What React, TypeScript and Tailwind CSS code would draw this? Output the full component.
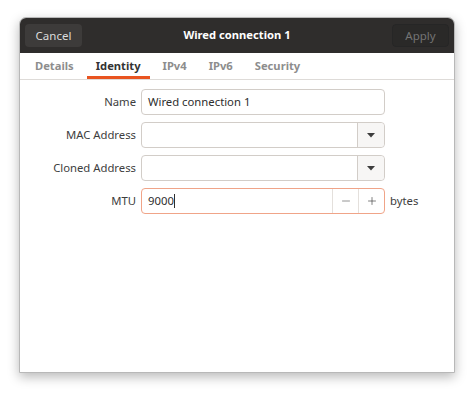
import { Minus, Plus } from "lucide-react";

const font = { fontFamily: '"Noto Sans", "Open Sans", sans-serif' };

function Caret() {
  return (
    <svg width="8" height="5" viewBox="0 0 8 5">
      <path d="M0 0 H8 L4 4.5 Z" fill="#3d3d3d" />
    </svg>
  );
}

function Row({ label, children }: { label: string; children: React.ReactNode }) {
  return (
    <div className="flex items-center h-[26px]">
      <div className="w-[121px] text-right pr-[5px] text-[11.3px] text-[#3d3d3d]">{label}</div>
      {children}
    </div>
  );
}

function Combo() {
  return (
    <div className="flex w-[244px] h-[26px] border border-[#d2cdc8] rounded-[4px] bg-white">
      <div className="flex-1" />
      <div className="w-[27px] border-l border-[#d2cdc8] bg-[#f7f6f5] rounded-r-[4px] flex items-center justify-center">
        <Caret />
      </div>
    </div>
  );
}

export default function App() {
  const tabs = ["Details", "Identity", "IPv4", "IPv6", "Security"];
  return (
    <div className="w-[474px] h-[395px] bg-white pt-[17px] pl-[19px]" style={font}>
      <div className="w-[436px] h-[356px] bg-white rounded-t-[7px] border border-[#b8b8b8] shadow-[0_4px_12px_rgba(0,0,0,0.28)] flex flex-col overflow-hidden">
        {/* Header bar */}
        <div className="h-[35px] bg-[#2f2d2c] flex items-center justify-between px-[5px] shrink-0">
          <button className="w-[57px] h-[23px] rounded-[4px] bg-[#3d3b3a] text-[#dcdcdc] text-[11.5px]">
            Cancel
          </button>
          <div className="text-white font-bold text-[11.2px]">Wired connection 1</div>
          <button className="w-[57px] h-[23px] rounded-[4px] bg-[#2a2928] border border-[#262626] text-[#747474] text-[11.5px]">
            Apply
          </button>
        </div>

        {/* Tabs */}
        <div className="h-[27px] border-b border-[#dedbd8] flex items-stretch gap-[4px] pl-[6px] shrink-0">
          {tabs.map((t) => {
            const active = t === "Identity";
            return (
              <div
                key={t}
                className={
                  "px-[9px] flex items-center text-[11.2px] font-bold border-b-[3px] " +
                  (active
                    ? "border-[#e95420] text-[#333333]"
                    : "border-transparent text-[#8d8d8d]")
                }
              >
                <span className="pt-[3px]">{t}</span>
              </div>
            );
          })}
        </div>

        {/* Form */}
        <div className="flex flex-col gap-[7px] pt-[9px]">
          <Row label="Name">
            <div className="w-[244px] h-[26px] border border-[#d2cdc8] rounded-[4px] flex items-center px-[6px] text-[11.3px] text-[#2e2e2e]">
              Wired connection 1
            </div>
          </Row>
          <Row label="MAC Address">
            <Combo />
          </Row>
          <Row label="Cloned Address">
            <Combo />
          </Row>
          <Row label="MTU">
            <div className="flex w-[244px] h-[26px] border border-[#f0a488] rounded-[4px] bg-white">
              <div className="flex-1 flex items-center px-[6px] text-[11.3px] text-[#2e2e2e]">
                9000<span className="w-px h-[14px] bg-[#2e2e2e]" />
              </div>
              <div className="w-[26px] border-l border-[#e4e0dc] flex items-center justify-center">
                <Minus size={12} strokeWidth={1.3} color="#5a5a5a" />
              </div>
              <div className="w-[26px] border-l border-[#e4e0dc] flex items-center justify-center">
                <Plus size={12} strokeWidth={1.3} color="#3d3d3d" />
              </div>
            </div>
            <div className="pl-[5px] text-[11.3px] text-[#3d3d3d]">bytes</div>
          </Row>
        </div>
      </div>
    </div>
  );
}
